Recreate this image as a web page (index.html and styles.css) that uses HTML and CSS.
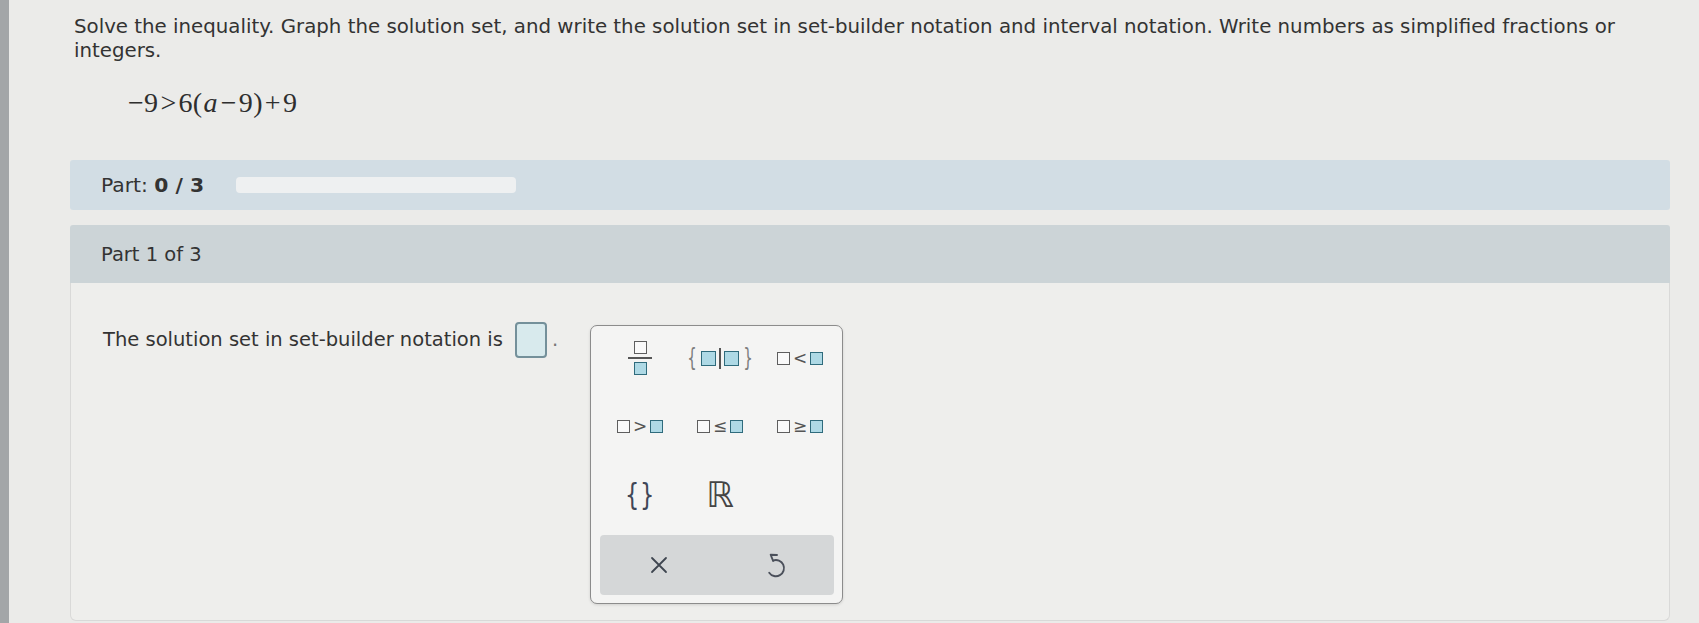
FILE: index.html
```html
<!DOCTYPE html>
<html lang="en">
<head>
<meta charset="utf-8">
<title>Solve the inequality</title>
<link rel="stylesheet" href="styles.css">
</head>
<body>
<div class="screen">
  <div class="edge"></div>
  <main class="page">
    <p class="prompt">Solve the inequality. Graph the solution set, and write the solution set in set-builder notation and interval notation. Write numbers as simplified fractions or integers.</p>
    <div class="equation"><span>−9</span><span class="op">&gt;</span><span>6(</span><i>a</i><span class="op">−</span><span>9)</span><span class="op">+</span><span>9</span></div>

    <div class="progress">
      <span class="progress-label">Part: <b>0 / 3</b></span>
      <div class="track"></div>
    </div>

    <section class="part">
      <header class="part-head">Part 1 of 3</header>
      <div class="part-body">
        <div class="answer-row">
          <span class="answer-text">The solution set in set-builder notation is</span>
          <span class="input-box"></span>
          <span class="period">.</span>
          <div class="palette">
            <div class="keys">
              <div class="key">
                <span class="frac"><span class="sq"></span><span class="frac-line"></span><span class="sq fill"></span></span>
              </div>
              <div class="key">
                <span class="setb"><span class="brace">{</span><span class="sq fill big"></span><span class="vbar"></span><span class="sq fill big"></span><span class="brace">}</span></span>
              </div>
              <div class="key"><span class="rel"><span class="sq"></span><span class="sym">&lt;</span><span class="sq fill"></span></span></div>
              <div class="key"><span class="rel"><span class="sq"></span><span class="sym">&gt;</span><span class="sq fill"></span></span></div>
              <div class="key"><span class="rel"><span class="sq"></span><span class="sym">≤</span><span class="sq fill"></span></span></div>
              <div class="key"><span class="rel"><span class="sq"></span><span class="sym">≥</span><span class="sq fill"></span></span></div>
              <div class="key"><span class="empty-set">{}</span></div>
              <div class="key"><span class="reals">ℝ</span></div>
              <div class="key"></div>
            </div>
            <div class="actions">
              <div class="action">
                <svg width="18" height="18" viewBox="0 0 18 18"><path d="M2 2 L16 16 M16 2 L2 16" stroke="#3f4650" stroke-width="1.8" fill="none" stroke-linecap="round"/></svg>
              </div>
              <div class="action">
                <svg width="22" height="26" viewBox="3 2.5 15 18"><path d="M8.5 8.4 A5.6 5.6 0 1 1 5.8 16.8" stroke="#4a4f5a" stroke-width="1.3" fill="none" stroke-linecap="round"/><path d="M11.2 4.6 L6.8 4.4 L8.5 8.6" stroke="#4a4f5a" stroke-width="1.3" fill="none" stroke-linecap="round" stroke-linejoin="round"/></svg>
              </div>
            </div>
          </div>
        </div>
      </div>
    </section>
  </main>
</div>
</body>
</html>
```
FILE: styles.css
```css
html, body {
  margin: 0;
  padding: 0;
}
body {
  background: #ebebe9;
  color: #333;
  font-family: "DejaVu Sans", Verdana, sans-serif;
  width: 1699px;
  height: 623px;
  overflow: hidden;
}
.screen {
  display: flex;
  height: 623px;
}
.edge {
  width: 9px;
  flex: none;
  background: #a3a6a8;
}
.page {
  flex: 1;
  min-width: 0;
}
.prompt {
  margin: 15px 0 0;
  padding-left: 65px;
  width: 1590px;
  font-size: 19.8px;
  line-height: 24px;
}
.equation {
  margin-top: 25px;
  padding-left: 119px;
  font-family: "Liberation Serif", "Times New Roman", serif;
  font-size: 28px;
  line-height: 30px;
  color: #2e2e2e;
  letter-spacing: 0.3px;
}
.equation i {
  font-style: italic;
  padding: 0 1px;
}
.equation .op {
  padding: 0 2px;
}
.progress {
  margin: 42px 0 0 61px;
  width: 1600px;
  height: 50px;
  box-sizing: border-box;
  background: #d2dde4;
  border-radius: 3px;
  display: flex;
  align-items: center;
  padding-left: 31px;
  font-size: 20.3px;
}
.progress b {
  font-weight: bold;
}
.track {
  width: 280px;
  height: 16px;
  margin-left: 32px;
  background: #eef0f1;
  border-radius: 4px;
}
.part {
  margin: 15px 0 0 61px;
  width: 1600px;
}
.part-head {
  height: 58px;
  background: #ccd4d7;
  border-radius: 3px 3px 0 0;
  display: flex;
  align-items: center;
  padding-left: 31px;
  font-size: 19.5px;
}
.part-body {
  height: 338px;
  box-sizing: border-box;
  background: #eeeeec;
  border: 1px solid #d9d9d8;
  border-top: none;
  border-radius: 0 0 6px 6px;
  padding: 39px 0 0 32px;
}
.answer-row {
  display: flex;
  align-items: flex-start;
}
.answer-text {
  font-size: 19.5px;
  line-height: 36px;
}
.input-box {
  width: 32px;
  height: 36px;
  box-sizing: border-box;
  margin-left: 12px;
  border: 2px solid #74909a;
  background: #d8eaed;
  border-radius: 4px;
}
.period {
  font-size: 19.5px;
  line-height: 36px;
  margin-left: 5px;
  color: #777;
}
.palette {
  margin: 3px 0 0 32px;
  width: 253px;
  height: 279px;
  box-sizing: border-box;
  border: 1px solid #8c8c8c;
  border-radius: 7px;
  background: #f4f4f3;
  box-shadow: 0 1px 3px rgba(0,0,0,0.12);
  padding: 0 8px 8px 9px;
}
.keys {
  display: grid;
  grid-template-columns: 80px 80px 80px;
  grid-template-rows: 64px 72px 66px;
}
.key {
  display: flex;
  align-items: center;
  justify-content: center;
}
.sq {
  display: inline-block;
  width: 13px;
  height: 13px;
  box-sizing: border-box;
  border: 1.7px solid #5e5e5e;
  background: #f9f9f9;
}
.sq.fill {
  border-color: #2f6b7c;
  background: #aed9e5;
}
.sq.big {
  width: 15px;
  height: 15px;
}
.frac {
  display: flex;
  flex-direction: column;
  align-items: center;
  gap: 3px;
}
.frac-line {
  width: 24px;
  height: 1.7px;
  background: #555;
}
.setb {
  display: flex;
  align-items: center;
  gap: 1px;
}
.brace {
  font-size: 25px;
  line-height: 24px;
  color: #7d7d7d;
  font-family: "DejaVu Sans", sans-serif;
  transform: scaleX(0.6);
}
.vbar {
  width: 2px;
  height: 21px;
  background: #555;
  margin: 0 2px;
}
.rel {
  display: flex;
  align-items: center;
  gap: 3px;
}
.sym {
  font-size: 17px;
  line-height: 16px;
  color: #555;
}
.empty-set {
  font-size: 30px;
  line-height: 32px;
  color: #3f4656;
  font-family: "DejaVu Sans", sans-serif;
  letter-spacing: 1px;
  transform: scaleX(0.75);
}
.reals {
  font-size: 35px;
  line-height: 34px;
  color: #444;
  font-family: "DejaVu Sans", sans-serif;
}
.actions {
  margin-top: 7px;
  height: 60px;
  background: #d5d7d8;
  border-radius: 4px;
  display: grid;
  grid-template-columns: 1fr 1fr;
}
.action {
  display: flex;
  align-items: center;
  justify-content: center;
}
```
